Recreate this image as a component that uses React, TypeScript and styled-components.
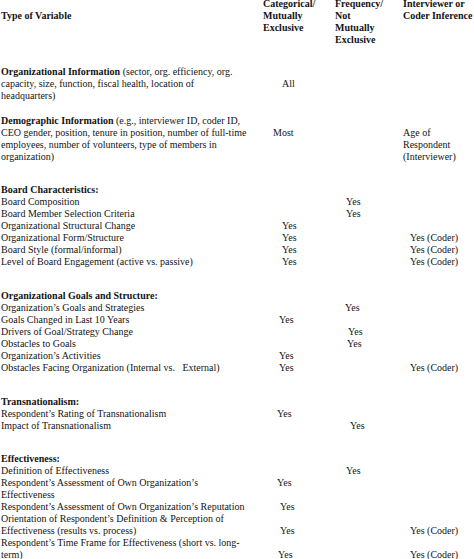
import React from "react";
import styled, { createGlobalStyle } from "styled-components";

const Global = createGlobalStyle`
  html, body { margin: 0; padding: 0; background: #ffffff; }
  body { font-family: "Liberation Serif", "Times New Roman", serif; color: #141414; }
`;

const Page = styled.div`
  width: 474px;
  padding-left: 1px;
  margin-top: -2px;
  font-size: 10px;
  line-height: 12px;
  overflow: hidden;
`;

const Section = styled.section<{ $gap: number }>`
  display: flex;
  flex-direction: column;
  margin-top: ${(p) => p.$gap}px;
`;

const Row = styled.div`
  display: grid;
  grid-template-columns: 262px 72px 68px 1fr;
  white-space: nowrap;
`;

const Label = styled.div<{ $bold?: boolean }>`
  font-weight: ${(p) => (p.$bold ? 700 : 400)};
`;

const Strong = styled.span`
  font-weight: 700;
`;

const Cell = styled.div<{ $indent?: number; $end?: boolean; $bold?: boolean; $line?: number }>`
  padding-left: ${(p) => p.$indent ?? 0}px;
  padding-top: ${(p) => ((p.$line ?? 1) - 1) * 12}px;
  align-self: ${(p) => (p.$end ? "end" : "start")};
  font-weight: ${(p) => (p.$bold ? 700 : 400)};
`;

type Item = {
  label: React.ReactNode;
  cat?: string;
  catX?: number;
  freq?: string;
  freqX?: number;
  coder?: React.ReactNode;
  coderX?: number;
  end?: boolean;
  line?: number;
};

const COL_CAT = 263;
const COL_FREQ = 335;
const COL_INT = 403;

const ItemRow: React.FC<{ item: Item }> = ({ item }) => (
  <Row>
    <Label>{item.label}</Label>
    <Cell $indent={item.catX ? item.catX - COL_CAT : 0} $end={item.end} $line={item.line}>
      {item.cat}
    </Cell>
    <Cell $indent={item.freqX ? item.freqX - COL_FREQ : 0} $end={item.end} $line={item.line}>
      {item.freq}
    </Cell>
    <Cell $indent={item.coderX ? item.coderX - COL_INT : 0} $end={item.end} $line={item.line}>
      {item.coder}
    </Cell>
  </Row>
);

const Group: React.FC<{ title: string; gap: number; items: Item[] }> = ({ title, gap, items }) => (
  <Section $gap={gap}>
    <Row>
      <Label $bold>{title}</Label>
    </Row>
    {items.map((it, i) => (
      <ItemRow key={i} item={it} />
    ))}
  </Section>
);

const board: Item[] = [
  { label: "Board Composition", freq: "Yes", freqX: 346 },
  { label: "Board Member Selection Criteria", freq: "Yes", freqX: 346 },
  { label: "Organizational Structural Change", cat: "Yes", catX: 282 },
  { label: "Organizational Form/Structure", cat: "Yes", catX: 282, coder: "Yes (Coder)", coderX: 410 },
  { label: "Board Style (formal/informal)", cat: "Yes", catX: 282, coder: "Yes (Coder)", coderX: 410 },
  { label: "Level of Board Engagement (active vs. passive)", cat: "Yes", catX: 282, coder: "Yes (Coder)", coderX: 410 },
];

const goals: Item[] = [
  { label: "Organization’s Goals and Strategies", freq: "Yes", freqX: 345 },
  { label: "Goals Changed in Last 10 Years", cat: "Yes", catX: 279 },
  { label: "Drivers of Goal/Strategy Change", freq: "Yes", freqX: 348 },
  { label: "Obstacles to Goals", freq: "Yes", freqX: 347 },
  { label: "Organization’s Activities", cat: "Yes", catX: 279 },
  {
    label: "Obstacles Facing Organization (Internal vs.\u00a0\u00a0\u00a0External)",
    cat: "Yes",
    catX: 279,
    coder: "Yes (Coder)",
    coderX: 410,
  },
];

const trans: Item[] = [
  { label: "Respondent’s Rating of Transnationalism", cat: "Yes", catX: 277 },
  { label: "Impact of Transnationalism", freq: "Yes", freqX: 350 },
];

const effect: Item[] = [
  { label: "Definition of Effectiveness", freq: "Yes", freqX: 346 },
  {
    label: (
      <>
        Respondent’s Assessment of Own Organization’s
        <br />
        Effectiveness
      </>
    ),
    cat: "Yes",
    catX: 277,
  },
  { label: "Respondent’s Assessment of Own Organization’s Reputation", cat: "Yes", catX: 280 },
  {
    label: (
      <>
        Orientation of Respondent’s Definition &amp; Perception of
        <br />
        Effectiveness (results vs. process)
      </>
    ),
    cat: "Yes",
    catX: 280,
    coder: "Yes (Coder)",
    coderX: 410,
    end: true,
  },
  {
    label: (
      <>
        Respondent’s Time Frame for Effectiveness (short vs. long-
        <br />
        term)
      </>
    ),
    cat: "Yes",
    catX: 278,
    coder: "Yes (Coder)",
    coderX: 410,
    end: true,
  },
];

export default function App() {
  return (
    <>
      <Global />
      <Page>
        <Row>
          <Label $bold>
            <br />
            Type of Variable
          </Label>
          <Cell $bold>
            Categorical/
            <br />
            Mutually
            <br />
            Exclusive
          </Cell>
          <Cell $bold>
            Frequency/
            <br />
            Not
            <br />
            Mutually
            <br />
            Exclusive
          </Cell>
          <Cell $bold>
            Interviewer or
            <br />
            Coder Inference
          </Cell>
        </Row>

        <Section $gap={20}>
          <ItemRow
            item={{
              label: (
                <>
                  <Strong>Organizational Information</Strong> (sector, org. efficiency, org.
                  <br />
                  capacity, size, function, fiscal health, location of
                  <br />
                  headquarters)
                </>
              ),
              cat: "All",
              catX: 282,
              line: 2,
            }}
          />
        </Section>

        <Section $gap={13}>
          <ItemRow
            item={{
              label: (
                <>
                  <Strong>Demographic Information</Strong> (e.g., interviewer ID, coder ID,
                  <br />
                  CEO gender, position, tenure in position, number of full-time
                  <br />
                  employees, number of volunteers, type of members in
                  <br />
                  organization)
                </>
              ),
              cat: "Most",
              catX: 273,
              coder: (
                <>
                  Age of
                  <br />
                  Respondent
                  <br />
                  (Interviewer)
                </>
              ),
              coderX: 403,
              line: 2,
            }}
          />
        </Section>

        <Group title="Board Characteristics:" gap={21} items={board} />
        <Group title="Organizational Goals and Structure:" gap={22} items={goals} />
        <Group title="Transnationalism:" gap={22} items={trans} />
        <Group title="Effectiveness:" gap={21} items={effect} />
      </Page>
    </>
  );
}
